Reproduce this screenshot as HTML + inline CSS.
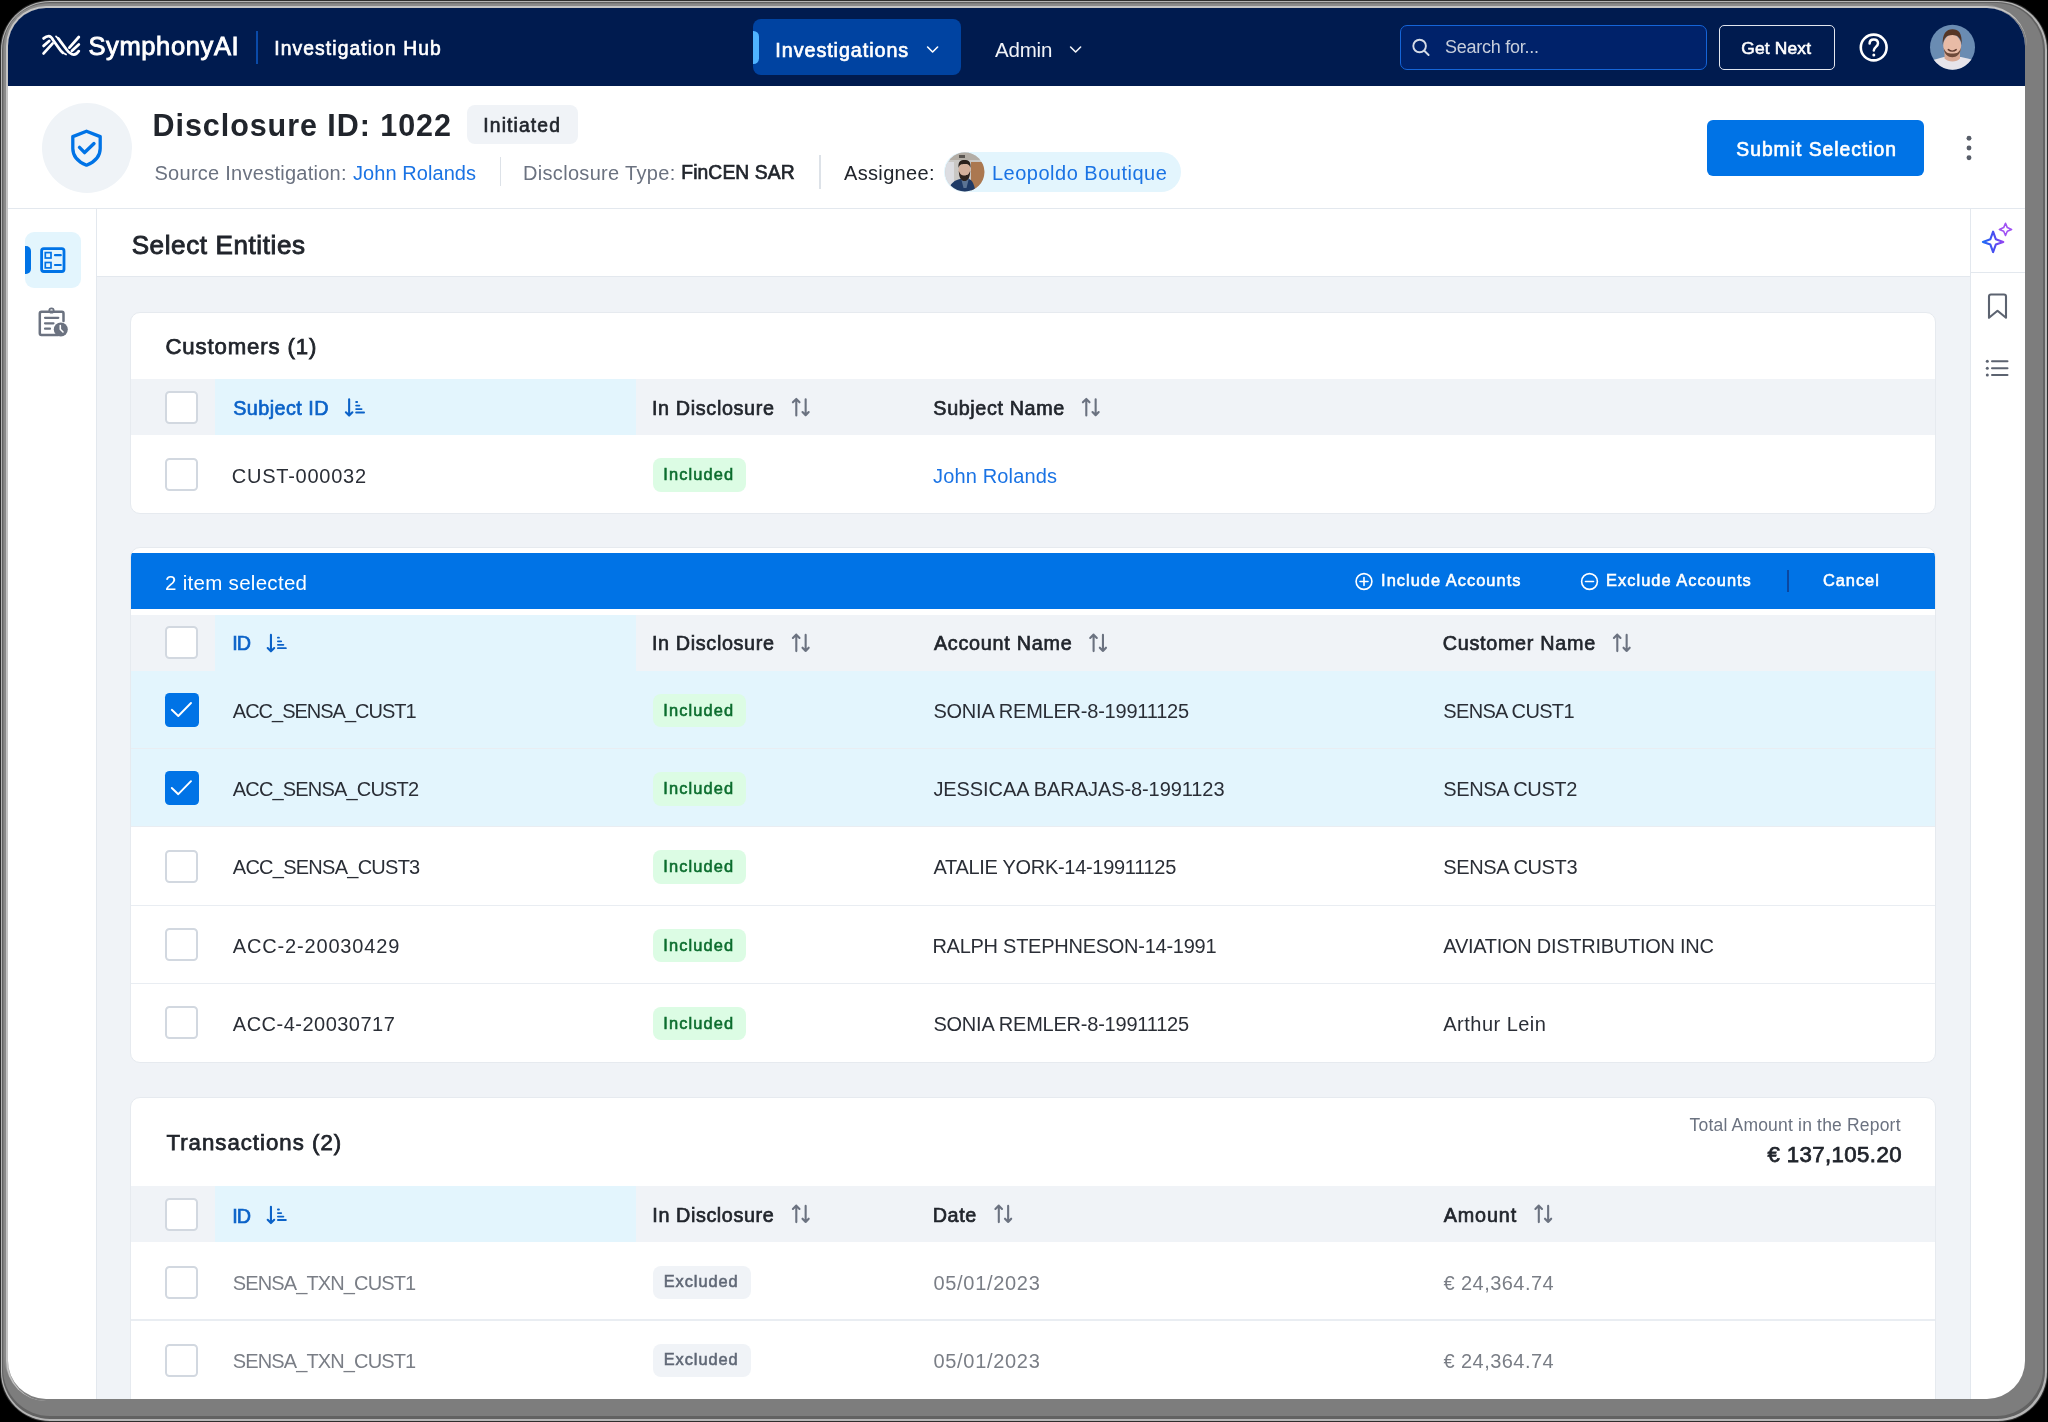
<!DOCTYPE html>
<html><head><meta charset="utf-8"><title>Disclosure</title>
<style>
html,body{margin:0;padding:0}
body{width:2048px;height:1422px;background:#000;position:relative;overflow:hidden;font-family:"Liberation Sans", sans-serif}
.tx{position:absolute;line-height:100px;white-space:nowrap}
.a{position:absolute}
.cb{width:33.2px;height:33.2px;box-sizing:border-box;border:2.4px solid #d2d8e0;border-radius:4.5px;background:#fff}
.cbc{width:33.7px;height:33.6px;border-radius:4.6px;background:#0073e6}
.bi{width:93.4px;height:33.4px;border-radius:8px;background:#dcfce4}
.be{width:98px;height:33px;border-radius:8px;background:#f0f3f7}
svg{position:absolute;overflow:visible}
</style></head><body>
<div class="a" style="left:0;top:0;width:2048px;height:1422px;border-radius:50px;background:#2e2e2e"></div>
<div class="a" style="left:1px;top:1px;width:2046px;height:1420px;border-radius:49px;background:#b5b5b5"></div>
<div class="a" style="left:2px;top:2px;width:2043px;height:1417px;border-radius:48px;background:#626262"></div>
<div class="a" style="left:3px;top:3px;width:2040px;height:1413px;border-radius:47px;background:#7d7d7d"></div>
<div class="a" style="left:4px;top:4px;width:2021px;height:1395px;border-radius:42px;border-left:2px solid #8a8a8a;border-top:2px solid #8a8a8a;box-sizing:border-box"></div>
<div class="a" style="left:6px;top:6px;width:2021px;height:1395px;border-radius:40px;border-left:2px solid #c4c4c4;border-top:2px solid #c4c4c4;box-sizing:border-box"></div>

<div class="a" style="left:8px;top:8px;width:2017px;height:1391px;border-radius:38px;overflow:hidden">
<div class="a" style="left:-8px;top:-8px;width:2048px;height:1422px">
<!-- backgrounds -->
<div class="a" style="left:0;top:0;width:2048px;height:1422px;background:#fff"></div>
<div class="a" style="left:0;top:0;width:2048px;height:86px;background:#001b4f"></div>
<div class="a" style="left:256px;top:30.5px;width:1.6px;height:33px;background:#0a4aa8"></div>
<div class="a" style="left:753px;top:19px;width:208px;height:56px;border-radius:8px;background:#0043a1;overflow:hidden"><div class="a" style="left:0;top:11.5px;width:6px;height:33.5px;border-radius:0 5.5px 5.5px 0;background:#4fb3ff"></div></div>
<div class="a" style="left:1399.5px;top:25px;width:307.5px;height:44.5px;box-sizing:border-box;border:1.5px solid #1565d8;border-radius:7px;background:#00226a"></div>
<div class="a" style="left:1718.6px;top:25px;width:116px;height:44.5px;box-sizing:border-box;border:1.7px solid #e2e6ee;border-radius:5px"></div>
<!-- disclosure header -->
<div class="a" style="left:0;top:208px;width:2048px;height:1.2px;background:#e3e8ee"></div>
<div class="a" style="left:41.8px;top:103px;width:90px;height:90px;border-radius:50%;background:#eff3f7"></div>
<div class="a" style="left:466.5px;top:105px;width:111.7px;height:39px;border-radius:8px;background:#f0f3f7"></div>
<div class="a" style="left:499.5px;top:157px;width:1.5px;height:29px;background:#dde2e8"></div>
<div class="a" style="left:819.2px;top:155px;width:1.5px;height:34px;background:#dde2e8"></div>
<div class="a" style="left:944px;top:152.3px;width:237px;height:39.5px;border-radius:20px;background:#e3f5fd"></div>
<div class="a" style="left:1707.3px;top:120.2px;width:217.2px;height:55.7px;border-radius:6px;background:#0073e6"></div>
<!-- sidebars -->
<div class="a" style="left:97px;top:277px;width:1873px;height:1150px;background:#f0f3f7"></div>
<div class="a" style="left:96.3px;top:209px;width:1.2px;height:1200px;background:#e3e8ee"></div>
<div class="a" style="left:1969.8px;top:209px;width:1.2px;height:1200px;background:#e3e8ee"></div>
<div class="a" style="left:97px;top:276px;width:1873px;height:1.2px;background:#e3e8ee"></div>
<div class="a" style="left:1970px;top:271.6px;width:60px;height:1.2px;background:#e3e8ee"></div>
<div class="a" style="left:25px;top:232px;width:56px;height:56px;border-radius:9px;background:#e3f5fd;overflow:hidden"><div class="a" style="left:0;top:14px;width:5.6px;height:28.3px;border-radius:0 5px 5px 0;background:#0073e6"></div></div>
<!-- customers card -->
<div class="a" style="left:130.4px;top:311.6px;width:1805.4px;height:202.5px;box-sizing:border-box;border:1px solid #e6eaef;border-radius:10px;background:#fff;overflow:hidden">
  <div class="a" style="left:0;top:66.6px;width:1807px;height:56px;background:#f0f3f7"></div>
  <div class="a" style="left:83.8px;top:66.6px;width:420.5px;height:56px;background:#e3f5fd"></div>
</div>
<!-- accounts card -->
<div class="a" style="left:130.4px;top:547px;width:1805.4px;height:515.8px;box-sizing:border-box;border:1px solid #e6eaef;border-radius:10px;background:#fff;overflow:hidden">
  <div class="a" style="left:-1px;top:5px;width:1807px;height:55.6px;background:#0073e6;border-radius:0 2px 0 0"></div>
  <div class="a" style="left:0;top:66.5px;width:1807px;height:56px;background:#f0f3f7"></div>
  <div class="a" style="left:83.8px;top:66.5px;width:420.5px;height:56px;background:#e3f5fd"></div>
  <div class="a" style="left:0;top:122.5px;width:1807px;height:156.4px;background:#e3f5fd"></div>
  <div class="a" style="left:0;top:200.2px;width:1807px;height:1.1px;background:#e9edf2"></div>
  <div class="a" style="left:0;top:278.4px;width:1807px;height:1.1px;background:#e9edf2"></div>
  <div class="a" style="left:0;top:356.7px;width:1807px;height:1.1px;background:#e9edf2"></div>
  <div class="a" style="left:0;top:435px;width:1807px;height:1.1px;background:#e9edf2"></div>
</div>
<div class="a" style="left:1787.3px;top:570px;width:1.8px;height:21.6px;background:#0b47a0"></div>
<!-- transactions card -->
<div class="a" style="left:130.4px;top:1096.6px;width:1805.4px;height:400px;box-sizing:border-box;border:1px solid #e6eaef;border-radius:10px;background:#fff;overflow:hidden">
  <div class="a" style="left:0;top:88.9px;width:1807px;height:55.5px;background:#f0f3f7"></div>
  <div class="a" style="left:83.8px;top:88.9px;width:420.5px;height:55.5px;background:#e3f5fd"></div>
  <div class="a" style="left:0;top:221.9px;width:1807px;height:1.1px;background:#e9edf2"></div>
</div>
<!-- checkboxes -->
<div class="a cb" style="left:165.2px;top:390.8px"></div>
<div class="a cb" style="left:165.2px;top:458px"></div>
<div class="a cb" style="left:165.2px;top:626.2px"></div>
<div class="a cbc" style="left:165px;top:693.1px"></div>
<div class="a cbc" style="left:165px;top:771.3px"></div>
<div class="a cb" style="left:165.2px;top:849.6px"></div>
<div class="a cb" style="left:165.2px;top:927.8px"></div>
<div class="a cb" style="left:165.2px;top:1006px"></div>
<div class="a cb" style="left:165.2px;top:1198.2px"></div>
<div class="a cb" style="left:165.2px;top:1265.7px"></div>
<div class="a cb" style="left:165.2px;top:1344px"></div>
<!-- badges -->
<div class="a bi" style="left:652.6px;top:458.3px"></div>
<div class="a bi" style="left:652.6px;top:694.0px"></div>
<div class="a bi" style="left:652.6px;top:772.2px"></div>
<div class="a bi" style="left:652.6px;top:850.4px"></div>
<div class="a bi" style="left:652.6px;top:928.7px"></div>
<div class="a bi" style="left:652.6px;top:1007.0px"></div>
<div class="a be" style="left:652.5px;top:1265.9px"></div>
<div class="a be" style="left:652.5px;top:1344.0px"></div>
<svg style="left:0;top:0" width="2048" height="1422" viewBox="0 0 2048 1422" fill="none" stroke-linecap="round" stroke-linejoin="round">
<!-- logo mark -->
<g stroke="#fff" stroke-width="2.8">
<path d="M43.6,38.4 C45.8,36.5 47.3,36.1 48.7,36.1 C50.6,36.1 51.9,37.6 53.2,40.2 L59.1,48.5 C60.5,50.6 61.6,52 62.8,52.7"/>
<path d="M58.3,38.6 C59.3,39.6 60.2,40.9 61,42.2 L66.5,49.5 C67.8,51.3 69,52.5 70.1,53 C71.3,54 72.5,54.7 73.8,54.7 C75.8,54.7 77.3,53.5 78.8,51.1"/>
<path d="M43.6,45.9 L49.2,41"/>
<path d="M43.6,53.4 L52.5,43.6"/>
<path d="M69.4,47.6 L78.8,37"/>
<path d="M72,50.8 L78.8,44.5"/>
</g>
<path d="M62.8,52.7 L66.1,54.6" stroke="#fff" stroke-width="1.7"/>
<path d="M56,36.3 L58.5,38.8" stroke="#fff" stroke-width="1.7"/>
<!-- chevrons -->
<path d="M927.6,47 L932.6,52 L937.6,47" stroke="#fff" stroke-width="1.6"/>
<path d="M1070.6,47 L1075.6,52 L1080.6,47" stroke="#f2f4f8" stroke-width="1.6"/>
<!-- search icon -->
<circle cx="1419.6" cy="46" r="6.3" stroke="#d5dbe6" stroke-width="1.9"/>
<path d="M1424.3,50.8 L1428.6,55" stroke="#d5dbe6" stroke-width="1.9"/>
<!-- help icon -->
<circle cx="1873.7" cy="47.5" r="12.9" stroke="#fff" stroke-width="2.6"/>
<path d="M1869.6,43.6 C1869.6,40.9 1871.4,39.4 1873.8,39.4 C1876.3,39.4 1878,41 1878,43.3 C1878,46.8 1873.8,47 1873.8,50.6" stroke="#fff" stroke-width="2.5"/>
<circle cx="1873.8" cy="55" r="1.5" fill="#fff"/>
<!-- header avatar -->
<defs>
<clipPath id="av1"><circle cx="1952.5" cy="47.2" r="22.5"/></clipPath>
<clipPath id="av2"><circle cx="964.8" cy="172" r="19.6"/></clipPath>
<linearGradient id="spk" x1="0" y1="0" x2="1" y2="0"><stop offset="0" stop-color="#1f6bf5"/><stop offset="0.55" stop-color="#4a4cf0"/><stop offset="1" stop-color="#9546f2"/></linearGradient>
</defs>
<g clip-path="url(#av1)">
<rect x="1928" y="22" width="50" height="50" fill="#6a8cb2"/>
<path d="M1928,72 L1928,62 C1934,59.5 1940,58 1944,57 L1961,57 C1966,58 1972,59.5 1978,62 L1978,72 Z" fill="#e6e4ea"/>
<path d="M1944.5,52 L1960,52 L1960,58.5 C1957,62.5 1948,62.5 1944.5,58.5 Z" fill="#d9a994"/>
<ellipse cx="1952.2" cy="45.8" rx="9" ry="11" fill="#e8bba6"/>
<path d="M1942.8,45 C1942,33.5 1946.5,29.3 1952.5,29.3 C1958.5,29.3 1962.5,33 1961.6,45 C1960.8,38 1958,35 1952.3,35 C1946.5,35 1943.8,38 1942.8,45 Z" fill="#553626"/>
<path d="M1943.6,47.5 C1944.2,54.5 1948,57.2 1952.3,57.2 C1956.6,57.2 1960.4,54.5 1961,47.5 C1959.5,52.5 1957,53.5 1952.3,53.5 C1947.6,53.5 1945.2,52.5 1943.6,47.5 Z" fill="#6e4a3a"/>
<path d="M1948.3,49.6 C1950.5,51.4 1954,51.4 1956.2,49.6" stroke="#5e3a2e" stroke-width="1.5"/>
</g>
<!-- assignee avatar -->
<g clip-path="url(#av2)">
<rect x="944" y="151" width="42" height="42" fill="#c9c7c4"/>
<rect x="944" y="151" width="42" height="9" fill="#b3ada5"/><rect x="959" y="155" width="6" height="3" fill="#5a5550"/>
<rect x="971" y="162" width="17" height="32" fill="#ab7850"/>
<rect x="944" y="162" width="10" height="30" fill="#dcdde2"/>
<path d="M947,193 C950,183 955,180 960,179 L969,179 C972,180 974.5,184 975.5,193 Z" fill="#1f3a66"/>
<path d="M961,178 L969,178 L966.5,188 L963.5,188 Z" fill="#5b7393"/>
<ellipse cx="964.5" cy="170" rx="6" ry="7.8" fill="#d4b09c"/>
<path d="M958.5,168 C958,161.5 960.5,160 964.5,160 C968.5,160 971,161.5 970.5,168 C969.5,164.5 968,164 964.5,164 C961,164 959.5,164.5 958.5,168 Z" fill="#2a211d"/>
<path d="M958.8,171 C959,178.5 961.5,181 964.5,181 C967.5,181 970,178.5 970.2,171 C968.5,175 967,175.5 964.5,175.5 C962,175.5 960.5,175 958.8,171 Z" fill="#2e2420"/>
</g>
<!-- shield -->
<path d="M86.5,131.2 L100.2,136.6 L100.2,148.5 C100.2,156.5 94.5,162 86.5,165.2 C78.5,162 72.8,156.5 72.8,148.5 L72.8,136.6 Z" stroke="#0073e6" stroke-width="3.3"/>
<path d="M79.5,147.4 L84.6,152.6 L94,143.6" stroke="#0073e6" stroke-width="3.4"/>
<!-- kebab -->
<circle cx="1969" cy="138.3" r="2.45" fill="#585e69"/>
<circle cx="1969" cy="148" r="2.45" fill="#585e69"/>
<circle cx="1969" cy="157.8" r="2.45" fill="#585e69"/>
<!-- left sidebar icons -->
<rect x="41.6" y="248.7" width="22.4" height="22.8" rx="2.2" stroke="#0073e6" stroke-width="2.8"/>
<rect x="45.3" y="252.6" width="5.7" height="5.4" stroke="#0073e6" stroke-width="1.7" stroke-linejoin="miter"/>
<rect x="45.3" y="262.5" width="5.7" height="5.4" stroke="#0073e6" stroke-width="1.7" stroke-linejoin="miter"/>
<path d="M55,255.2 L60.8,255.2 M55,265 L60.8,265" stroke="#0073e6" stroke-width="2.2"/>
<path d="M58,335 L41.5,335 C40.5,335 39.8,334.3 39.8,333.3 L39.8,313.5 C39.8,312.5 40.5,311.8 41.5,311.8 L62,311.8 C63,311.8 63.5,312.5 63.5,313.5 L63.5,321" stroke="#6b7280" stroke-width="2.5"/>
<circle cx="51.5" cy="310.5" r="2.2" stroke="#6b7280" stroke-width="1.8"/>
<path d="M45,317.8 L58.3,317.8 M45,323.3 L53.5,323.3 M45,328.7 L50,328.7" stroke="#6b7280" stroke-width="2.2"/>
<circle cx="60.8" cy="329.5" r="7" fill="#6b7280"/>
<path d="M60.3,325.5 L60.3,329.3 L63,332" stroke="#fff" stroke-width="1.6"/>
<!-- right sidebar icons -->
<path d="M1993.10,231.70 L1995.80,239.20 L2003.30,241.90 L1995.80,244.60 L1993.10,252.10 L1990.40,244.60 L1982.90,241.90 L1990.40,239.20 Z" stroke="url(#spk)" stroke-width="2.1"/>
<path d="M2005.50,223.30 L2007.30,227.60 L2011.60,229.40 L2007.30,231.20 L2005.50,235.50 L2003.70,231.20 L1999.40,229.40 L2003.70,227.60 Z" stroke="#a052f3" stroke-width="1.6"/>
<path d="M1989,317.8 L1989,296.5 C1989,295.3 1989.8,294.5 1991,294.5 L2004,294.5 C2005.2,294.5 2006,295.3 2006,296.5 L2006,317.8 L1997.5,310.8 Z" stroke="#5c6370" stroke-width="2.1"/>
<path d="M1992,361.2 L2007.5,361.2 M1992,368.2 L2007.5,368.2 M1992,375.1 L2007.5,375.1" stroke="#5c6370" stroke-width="2"/>
<circle cx="1987.3" cy="361.2" r="1.5" fill="#5c6370"/>
<circle cx="1987.3" cy="368.2" r="1.5" fill="#5c6370"/>
<circle cx="1987.3" cy="375.1" r="1.5" fill="#5c6370"/>
<!-- selection bar icons -->
<circle cx="1364" cy="581.5" r="7.9" stroke="#fff" stroke-width="1.6"/>
<path d="M1364,577.5 L1364,585.5 M1360,581.5 L1368,581.5" stroke="#fff" stroke-width="1.6"/>
<circle cx="1589.5" cy="581.5" r="7.9" stroke="#fff" stroke-width="1.6"/>
<path d="M1585.5,581.5 L1593.5,581.5" stroke="#fff" stroke-width="1.6"/>
<!-- checkmarks -->
<path d="M171.8,709.8 L178.3,716 L191,703" stroke="#fff" stroke-width="1.9"/>
<path d="M171.8,788 L178.3,794.2 L191,781.2" stroke="#fff" stroke-width="1.9"/>
<g transform="translate(340,395)" stroke="#0b62c8"><path d="M9.14,4.2 L9.14,20.2 M5.9,17.3 L9.14,20.6 L12.4,17.3" stroke-width="2.1"/><path d="M16.1,7 L17.2,7 M16.1,10.6 L19.4,10.6 M16.1,14.1 L21.6,14.1 M16.1,17.5 L24.1,17.5" stroke-width="1.8"/></g>
<g transform="translate(786,394)" stroke="#6b7280" stroke-width="2.1"><path d="M10.3,5 L10.3,21.4 M6.9,8.3 L10.3,4.9 L13.5,8.3"/><path d="M19.65,5.2 L19.65,21.3 M16.5,18 L19.65,21.3 L22.7,18"/></g>
<g transform="translate(1076,394)" stroke="#6b7280" stroke-width="2.1"><path d="M10.3,5 L10.3,21.4 M6.9,8.3 L10.3,4.9 L13.5,8.3"/><path d="M19.65,5.2 L19.65,21.3 M16.5,18 L19.65,21.3 L22.7,18"/></g>
<g transform="translate(261.8,630.7)" stroke="#0b62c8"><path d="M9.14,4.2 L9.14,20.2 M5.9,17.3 L9.14,20.6 L12.4,17.3" stroke-width="2.1"/><path d="M16.1,7 L17.2,7 M16.1,10.6 L19.4,10.6 M16.1,14.1 L21.6,14.1 M16.1,17.5 L24.1,17.5" stroke-width="1.8"/></g>
<g transform="translate(786,629.7)" stroke="#6b7280" stroke-width="2.1"><path d="M10.3,5 L10.3,21.4 M6.9,8.3 L10.3,4.9 L13.5,8.3"/><path d="M19.65,5.2 L19.65,21.3 M16.5,18 L19.65,21.3 L22.7,18"/></g>
<g transform="translate(1083.3,629.7)" stroke="#6b7280" stroke-width="2.1"><path d="M10.3,5 L10.3,21.4 M6.9,8.3 L10.3,4.9 L13.5,8.3"/><path d="M19.65,5.2 L19.65,21.3 M16.5,18 L19.65,21.3 L22.7,18"/></g>
<g transform="translate(1607,629.7)" stroke="#6b7280" stroke-width="2.1"><path d="M10.3,5 L10.3,21.4 M6.9,8.3 L10.3,4.9 L13.5,8.3"/><path d="M19.65,5.2 L19.65,21.3 M16.5,18 L19.65,21.3 L22.7,18"/></g>
<g transform="translate(261.8,1202.5)" stroke="#0b62c8"><path d="M9.14,4.2 L9.14,20.2 M5.9,17.3 L9.14,20.6 L12.4,17.3" stroke-width="2.1"/><path d="M16.1,7 L17.2,7 M16.1,10.6 L19.4,10.6 M16.1,14.1 L21.6,14.1 M16.1,17.5 L24.1,17.5" stroke-width="1.8"/></g>
<g transform="translate(786,1200.7)" stroke="#6b7280" stroke-width="2.1"><path d="M10.3,5 L10.3,21.4 M6.9,8.3 L10.3,4.9 L13.5,8.3"/><path d="M19.65,5.2 L19.65,21.3 M16.5,18 L19.65,21.3 L22.7,18"/></g>
<g transform="translate(988.5,1200.7)" stroke="#6b7280" stroke-width="2.1"><path d="M10.3,5 L10.3,21.4 M6.9,8.3 L10.3,4.9 L13.5,8.3"/><path d="M19.65,5.2 L19.65,21.3 M16.5,18 L19.65,21.3 L22.7,18"/></g>
<g transform="translate(1528.5,1200.7)" stroke="#6b7280" stroke-width="2.1"><path d="M10.3,5 L10.3,21.4 M6.9,8.3 L10.3,4.9 L13.5,8.3"/><path d="M19.65,5.2 L19.65,21.3 M16.5,18 L19.65,21.3 L22.7,18"/></g>
</svg>


<div class="a" style="left:0;top:0;width:2048px;height:1422px;will-change:transform">
<div class="tx" style="left:88.43px;top:-4.39px;font-size:25.57px;color:#ffffff;-webkit-text-stroke:0.87px #ffffff;letter-spacing:0.590px;">SymphonyAI</div>
<div class="tx" style="left:274.33px;top:-1.20px;font-size:19.3px;color:#ffffff;-webkit-text-stroke:0.66px #ffffff;letter-spacing:1.086px;">Investigation Hub</div>
<div class="tx" style="left:775.34px;top:0.10px;font-size:19.78px;color:#ffffff;-webkit-text-stroke:0.67px #ffffff;letter-spacing:0.927px;">Investigations</div>
<div class="tx" style="left:995.00px;top:0.40px;font-size:20.5px;color:#f2f4f8;letter-spacing:-0.176px;">Admin</div>
<div class="tx" style="left:1445.00px;top:-2.80px;font-size:18px;color:#c7cedb;letter-spacing:-0.262px;">Search for...</div>
<div class="tx" style="left:1741.30px;top:-2.47px;font-size:17.37px;color:#ffffff;-webkit-text-stroke:0.59px #ffffff;letter-spacing:0.177px;">Get Next</div>
<div class="tx" style="left:152.50px;top:74.75px;font-size:30.5px;color:#21252c;font-weight:700;letter-spacing:0.947px;">Disclosure ID: 1022</div>
<div class="tx" style="left:483.33px;top:75.70px;font-size:19.3px;color:#21252c;-webkit-text-stroke:0.66px #21252c;letter-spacing:1.129px;">Initiated</div>
<div class="tx" style="left:154.50px;top:122.50px;font-size:20px;color:#6b7280;letter-spacing:0.264px;">Source Investigation:</div>
<div class="tx" style="left:353.00px;top:122.50px;font-size:20px;color:#1a73e4;letter-spacing:0.063px;">John Rolands</div>
<div class="tx" style="left:523.00px;top:122.50px;font-size:20px;color:#6b7280;letter-spacing:0.315px;">Disclosure Type:</div>
<div class="tx" style="left:681.33px;top:123.20px;font-size:19.3px;color:#21252c;-webkit-text-stroke:0.66px #21252c;letter-spacing:0.086px;">FinCEN SAR</div>
<div class="tx" style="left:844.00px;top:122.50px;font-size:20px;color:#21252c;letter-spacing:0.341px;">Assignee:</div>
<div class="tx" style="left:992.00px;top:122.50px;font-size:20px;color:#1a73e4;letter-spacing:0.500px;">Leopoldo Boutique</div>
<div class="tx" style="left:1736.33px;top:99.70px;font-size:19.3px;color:#ffffff;-webkit-text-stroke:0.66px #ffffff;letter-spacing:0.992px;">Submit Selection</div>
<div class="tx" style="left:131.64px;top:194.60px;font-size:26.05px;color:#21252c;-webkit-text-stroke:0.89px #21252c;letter-spacing:0.600px;">Select Entities</div>
<div class="tx" style="left:165.38px;top:296.86px;font-size:22.2px;color:#21252c;-webkit-text-stroke:0.75px #21252c;letter-spacing:0.866px;">Customers (1)</div>
<div class="tx" style="left:233.14px;top:358.40px;font-size:19.78px;color:#0b62c8;-webkit-text-stroke:0.67px #0b62c8;letter-spacing:0.469px;">Subject ID</div>
<div class="tx" style="left:651.94px;top:358.20px;font-size:19.78px;color:#21252c;-webkit-text-stroke:0.67px #21252c;letter-spacing:0.648px;">In Disclosure</div>
<div class="tx" style="left:933.34px;top:358.20px;font-size:19.78px;color:#21252c;-webkit-text-stroke:0.67px #21252c;letter-spacing:0.616px;">Subject Name</div>
<div class="tx" style="left:231.80px;top:425.50px;font-size:20px;color:#2a2e36;letter-spacing:0.758px;">CUST-000032</div>
<div class="tx" style="left:933.00px;top:425.50px;font-size:20px;color:#1a73e4;letter-spacing:0.154px;">John Rolands</div>
<div class="tx" style="left:165.00px;top:532.80px;font-size:20.5px;color:#ffffff;letter-spacing:0.295px;">2 item selected</div>
<div class="tx" style="left:1381.08px;top:530.25px;font-size:16.41px;color:#ffffff;-webkit-text-stroke:0.56px #ffffff;letter-spacing:1.020px;">Include Accounts</div>
<div class="tx" style="left:1606.08px;top:530.25px;font-size:16.41px;color:#ffffff;-webkit-text-stroke:0.56px #ffffff;letter-spacing:1.016px;">Exclude Accounts</div>
<div class="tx" style="left:1822.98px;top:530.25px;font-size:16.41px;color:#ffffff;-webkit-text-stroke:0.56px #ffffff;letter-spacing:0.964px;">Cancel</div>
<div class="tx" style="left:232.14px;top:593.20px;font-size:19.78px;color:#0b62c8;-webkit-text-stroke:0.67px #0b62c8;letter-spacing:-0.964px;">ID</div>
<div class="tx" style="left:651.94px;top:593.20px;font-size:19.78px;color:#21252c;-webkit-text-stroke:0.67px #21252c;letter-spacing:0.648px;">In Disclosure</div>
<div class="tx" style="left:933.94px;top:593.20px;font-size:19.78px;color:#21252c;-webkit-text-stroke:0.67px #21252c;letter-spacing:0.735px;">Account Name</div>
<div class="tx" style="left:1442.74px;top:593.20px;font-size:19.78px;color:#21252c;-webkit-text-stroke:0.67px #21252c;letter-spacing:0.711px;">Customer Name</div>
<div class="tx" style="left:232.80px;top:660.90px;font-size:20px;color:#2a2e36;letter-spacing:-1.001px;">ACC_SENSA_CUST1</div>
<div class="tx" style="left:933.40px;top:660.90px;font-size:20px;color:#2a2e36;letter-spacing:-0.217px;">SONIA REMLER-8-19911125</div>
<div class="tx" style="left:1443.30px;top:660.90px;font-size:20px;color:#2a2e36;letter-spacing:-0.660px;">SENSA CUST1</div>
<div class="tx" style="left:663.28px;top:659.85px;font-size:16.41px;color:#0c6d2e;-webkit-text-stroke:0.56px #0c6d2e;letter-spacing:1.120px;">Included</div>
<div class="tx" style="left:232.80px;top:739.10px;font-size:20px;color:#2a2e36;letter-spacing:-0.830px;">ACC_SENSA_CUST2</div>
<div class="tx" style="left:933.40px;top:739.10px;font-size:20px;color:#2a2e36;letter-spacing:-0.080px;">JESSICAA BARAJAS-8-1991123</div>
<div class="tx" style="left:1443.30px;top:739.10px;font-size:20px;color:#2a2e36;letter-spacing:-0.380px;">SENSA CUST2</div>
<div class="tx" style="left:663.28px;top:738.05px;font-size:16.41px;color:#0c6d2e;-webkit-text-stroke:0.56px #0c6d2e;letter-spacing:1.120px;">Included</div>
<div class="tx" style="left:232.80px;top:817.30px;font-size:20px;color:#2a2e36;letter-spacing:-0.744px;">ACC_SENSA_CUST3</div>
<div class="tx" style="left:933.40px;top:817.30px;font-size:20px;color:#2a2e36;letter-spacing:-0.297px;">ATALIE YORK-14-19911125</div>
<div class="tx" style="left:1443.30px;top:817.30px;font-size:20px;color:#2a2e36;letter-spacing:-0.360px;">SENSA CUST3</div>
<div class="tx" style="left:663.28px;top:816.25px;font-size:16.41px;color:#0c6d2e;-webkit-text-stroke:0.56px #0c6d2e;letter-spacing:1.120px;">Included</div>
<div class="tx" style="left:232.80px;top:895.60px;font-size:20px;color:#2a2e36;letter-spacing:0.836px;">ACC-2-20030429</div>
<div class="tx" style="left:932.40px;top:895.60px;font-size:20px;color:#2a2e36;letter-spacing:-0.260px;">RALPH STEPHNESON-14-1991</div>
<div class="tx" style="left:1443.30px;top:895.60px;font-size:20px;color:#2a2e36;letter-spacing:-0.267px;">AVIATION DISTRIBUTION INC</div>
<div class="tx" style="left:663.28px;top:894.55px;font-size:16.41px;color:#0c6d2e;-webkit-text-stroke:0.56px #0c6d2e;letter-spacing:1.120px;">Included</div>
<div class="tx" style="left:232.80px;top:973.90px;font-size:20px;color:#2a2e36;letter-spacing:0.490px;">ACC-4-20030717</div>
<div class="tx" style="left:933.40px;top:973.90px;font-size:20px;color:#2a2e36;letter-spacing:-0.217px;">SONIA REMLER-8-19911125</div>
<div class="tx" style="left:1443.30px;top:973.90px;font-size:20px;color:#2a2e36;letter-spacing:0.479px;">Arthur Lein</div>
<div class="tx" style="left:663.28px;top:972.85px;font-size:16.41px;color:#0c6d2e;-webkit-text-stroke:0.56px #0c6d2e;letter-spacing:1.120px;">Included</div>
<div class="tx" style="left:166.38px;top:1092.66px;font-size:22.2px;color:#21252c;-webkit-text-stroke:0.75px #21252c;letter-spacing:1.024px;">Transactions (2)</div>
<div class="tx" style="left:1689.60px;top:1074.50px;font-size:17.5px;color:#6b7280;letter-spacing:0.187px;">Total Amount in the Report</div>
<div class="tx" style="left:1767.38px;top:1105.46px;font-size:22.2px;color:#21252c;-webkit-text-stroke:0.75px #21252c;letter-spacing:0.421px;">€ 137,105.20</div>
<div class="tx" style="left:232.14px;top:1165.50px;font-size:19.78px;color:#0b62c8;-webkit-text-stroke:0.67px #0b62c8;letter-spacing:-0.964px;">ID</div>
<div class="tx" style="left:652.34px;top:1165.20px;font-size:19.78px;color:#21252c;-webkit-text-stroke:0.67px #21252c;letter-spacing:0.590px;">In Disclosure</div>
<div class="tx" style="left:932.74px;top:1165.20px;font-size:19.78px;color:#21252c;-webkit-text-stroke:0.67px #21252c;letter-spacing:0.590px;">Date</div>
<div class="tx" style="left:1443.74px;top:1165.20px;font-size:19.78px;color:#21252c;-webkit-text-stroke:0.67px #21252c;letter-spacing:0.860px;">Amount</div>
<div class="tx" style="left:232.80px;top:1232.70px;font-size:20px;color:#7a7e86;letter-spacing:-0.878px;">SENSA_TXN_CUST1</div>
<div class="tx" style="left:663.68px;top:1231.15px;font-size:16.41px;color:#5f6775;-webkit-text-stroke:0.56px #5f6775;letter-spacing:0.939px;">Excluded</div>
<div class="tx" style="left:933.40px;top:1232.70px;font-size:20px;color:#7a7e86;letter-spacing:0.703px;">05/01/2023</div>
<div class="tx" style="left:1443.40px;top:1232.70px;font-size:20px;color:#7a7e86;letter-spacing:0.457px;">€ 24,364.74</div>
<div class="tx" style="left:232.80px;top:1310.90px;font-size:20px;color:#7a7e86;letter-spacing:-0.878px;">SENSA_TXN_CUST1</div>
<div class="tx" style="left:663.68px;top:1309.35px;font-size:16.41px;color:#5f6775;-webkit-text-stroke:0.56px #5f6775;letter-spacing:0.939px;">Excluded</div>
<div class="tx" style="left:933.40px;top:1310.90px;font-size:20px;color:#7a7e86;letter-spacing:0.703px;">05/01/2023</div>
<div class="tx" style="left:1443.40px;top:1310.90px;font-size:20px;color:#7a7e86;letter-spacing:0.457px;">€ 24,364.74</div>
<div class="tx" style="left:663.28px;top:424.15px;font-size:16.41px;color:#0c6d2e;-webkit-text-stroke:0.56px #0c6d2e;letter-spacing:1.120px;">Included</div>
</div>
</div></div>
</body></html>
